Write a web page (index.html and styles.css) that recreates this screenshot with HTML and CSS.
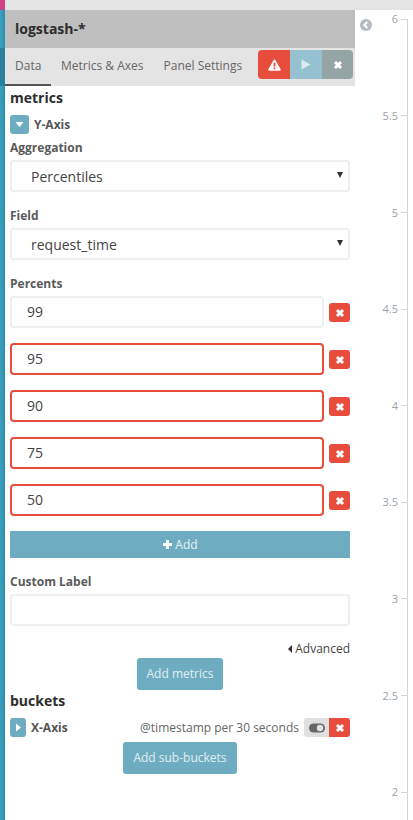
FILE: index.html
```html
<!DOCTYPE html>
<html lang="en">
<head>
<meta charset="utf-8">
<title>logstash-*</title>
<link rel="stylesheet" href="styles.css">
</head>
<body>
<div class="topbar"></div>
<div class="main">
  <aside class="sidebar">
    <div class="title">logstash-*</div>
    <div class="tabs">
      <span class="tab active">Data</span>
      <span class="tab">Metrics &amp; Axes</span>
      <span class="tab">Panel Settings</span>
      <div class="actions">
        <span class="act act-red"><svg width="13" height="12" viewBox="0 0 14 13"><path fill="#fff" fill-rule="evenodd" d="M7 0.500c.4 0 .7.2.9.5l5.800 10.200c.4.7-.1 1.500-.9 1.500H1.200c-.8 0-1.300-.8-.9-1.500L6.100 1c.2-.3.5-.5.9-.5zM6 4v4.200h2V4zM6 9.200V11h2V9.200z"/></svg></span>
        <span class="act act-blue"><svg width="10" height="11" viewBox="0 0 10 11"><path fill="#dcebf0" d="M0.500 0.500L9.500 5.500L0.500 10.500z"/></svg></span>
        <span class="act act-gray"><svg class="x" viewBox="0 0 10 10"><path d="M2 2L8 8M8 2L2 8"/></svg></span>
      </div>
    </div>
    <div class="content">
      <h2 class="section">metrics</h2>
      <div class="agg-head">
        <span class="toggle"><svg width="9" height="5" viewBox="0 0 9 5"><path fill="#fff" d="M0.500 0H8.500L4.500 5z"/></svg></span>
        <span class="agg-name">Y-Axis</span>
      </div>
      <label class="lbl">Aggregation</label>
      <div class="field select"><span>Percentiles</span><i class="caret"></i></div>
      <label class="lbl l-gap">Field</label>
      <div class="field select"><span>request_time</span><i class="caret"></i></div>
      <label class="lbl l-gap">Percents</label>
      <div class="pct-row">
        <div class="field pct">99</div>
        <span class="del"><svg class="x" viewBox="0 0 10 10"><path d="M2 2L8 8M8 2L2 8"/></svg></span>
      </div>
      <div class="pct-row">
        <div class="field pct bad">95</div>
        <span class="del"><svg class="x" viewBox="0 0 10 10"><path d="M2 2L8 8M8 2L2 8"/></svg></span>
      </div>
      <div class="pct-row">
        <div class="field pct bad">90</div>
        <span class="del"><svg class="x" viewBox="0 0 10 10"><path d="M2 2L8 8M8 2L2 8"/></svg></span>
      </div>
      <div class="pct-row">
        <div class="field pct bad">75</div>
        <span class="del"><svg class="x" viewBox="0 0 10 10"><path d="M2 2L8 8M8 2L2 8"/></svg></span>
      </div>
      <div class="pct-row">
        <div class="field pct bad">50</div>
        <span class="del"><svg class="x" viewBox="0 0 10 10"><path d="M2 2L8 8M8 2L2 8"/></svg></span>
      </div>
      <div class="add-bar"><svg width="11" height="11" viewBox="0 0 11 11"><path fill="#fff" d="M4 1h3v3h3v3H7v3H4V7H1V4h3z"/></svg><span>Add</span></div>
      <label class="lbl l-gap">Custom Label</label>
      <div class="field"></div>
      <div class="advanced"><i class="caret-left"></i>Advanced</div>
      <div class="center"><span class="btn btn-metrics">Add metrics</span></div>
      <h2 class="section buckets">buckets</h2>
      <div class="agg-head x-head">
        <span class="toggle narrow"><svg width="5" height="9" viewBox="0 0 5 9"><path fill="#fff" d="M0 0.500V8.500L5 4.500z"/></svg></span>
        <span class="agg-name">X-Axis</span>
        <span class="agg-desc">@timestamp per 30 seconds</span>
        <span class="switch"><svg width="16" height="10" viewBox="0 0 16 10"><rect x="0" y="0.500" width="16" height="9" rx="4.500" fill="#666"/><circle cx="11" cy="5" r="3.200" fill="#e4e4e4"/></svg></span>
        <span class="del joined"><svg class="x" viewBox="0 0 10 10"><path d="M2 2L8 8M8 2L2 8"/></svg></span>
      </div>
      <div class="center"><span class="btn btn-sub">Add sub-buckets</span></div>
    </div>
  </aside>
  <section class="chart">
    <span class="collapse"><svg width="12" height="12" viewBox="0 0 12 12"><circle cx="6" cy="6" r="6" fill="#b4bcc2"/><path d="M7.300 3L4.300 6L7.300 9" fill="none" stroke="#fff" stroke-width="2"/></svg></span>
    <div class="axis">
      <div class="tick">6</div>
      <div class="tick">5.5</div>
      <div class="tick">5</div>
      <div class="tick">4.5</div>
      <div class="tick">4</div>
      <div class="tick">3.5</div>
      <div class="tick">3</div>
      <div class="tick">2.5</div>
      <div class="tick">2</div>
    </div>
  </section>
</div>
</body>
</html>
```
FILE: styles.css
```css
* { box-sizing: border-box; }
html, body { margin: 0; padding: 0; }
body {
  width: 413px;
  height: 820px;
  overflow: hidden;
  background: #fff;
  font-family: "Open Sans", sans-serif;
  color: #444;
  position: relative;
}
.topbar { height: 10px; background: #e4e4e4; margin-left: 5px; }
body::before {
  content: "";
  position: absolute;
  left: 0;
  top: 0;
  width: 5px;
  height: 820px;
  background:
    linear-gradient(#d63f80 0, #d63f80 6px, #b54a8c 10px, transparent 10px),
    linear-gradient(transparent 48px, #2a7f9f 48px, #2a7f9f 86px, transparent 86px),
    linear-gradient(to right, #3fa0bd, #2a8fb0);
}
.main { display: flex; height: 810px; padding-left: 5px; }
.sidebar { width: 350px; flex: none; }
.title {
  height: 38px;
  background: #bfbfbf;
  padding-left: 10px;
  font-size: 14px;
  font-weight: 700;
  line-height: 38px;
  color: #2d2d2d;
}
.tabs {
  height: 38px;
  background: #e4e4e4;
  display: flex;
  align-items: stretch;
  font-size: 12px;
  color: #666;
}
.tab { padding: 0 10px; line-height: 36px; }
.tab.active { border-bottom: 2px solid #555; width: 46px; }
.tab + .tab { padding-left: 10px; }
.actions {
  display: flex;
  margin: 2px 0 0 6px;
  height: 29px;
  border-radius: 4px;
  overflow: hidden;
}
.act { width: 32px; display: flex; align-items: center; justify-content: center; }
.act-red { background: #e74c3c; }
.act-blue { background: #96c1d0; }
.act-gray { background: #95a5a6; width: 31px; }
.x { width: 10px; height: 10px; fill: none; stroke: #fff; stroke-width: 3; }
.content { padding: 0 0 0 5px; }
.section {
  margin: 0;
  font-size: 14px;
  font-weight: 700;
  line-height: 20px;
  padding-top: 2px;
  color: #2d2d2d;
}
.agg-head { display: flex; align-items: center; height: 19px; margin-top: 7px; }
.toggle {
  width: 19px;
  height: 19px;
  background: #6eadc1;
  border-radius: 3px;
  display: flex;
  align-items: center;
  justify-content: center;
}
.toggle.narrow { width: 16px; }
.agg-name { font-size: 12px; font-weight: 700; color: #555; margin-left: 5px; }
.lbl {
  display: block;
  font-size: 12px;
  font-weight: 700;
  line-height: 16px;
  color: #5a5a5a;
  margin-top: 6px;
  margin-bottom: 4px;
}
.lbl.l-gap { margin-top: 16px; }
.field {
  height: 32px;
  width: 340px;
  border: 2px solid #ecf0f1;
  border-radius: 4px;
  font-size: 14px;
  line-height: 28px;
  color: #444;
  padding-left: 15px;
  background: #fff;
}
.select {
  padding: 2px 5px 0 19px;
  display: flex;
  justify-content: space-between;
  align-items: center;
}
.caret {
  display: block;
  width: 0;
  height: 0;
  margin-top: -4px;
  border-left: 3px solid transparent;
  border-right: 3px solid transparent;
  border-top: 6px solid #333;
}
.pct-row { display: flex; align-items: center; width: 340px; justify-content: space-between; margin-bottom: 15px; }
.pct { width: 314px; }
.pct.bad { border-color: #e74c3c; }
.del {
  width: 21px;
  height: 19px;
  margin-top: 1px;
  background: #e74c3c;
  border-radius: 3px;
  display: flex;
  align-items: center;
  justify-content: center;
}
.add-bar {
  height: 27px;
  width: 340px;
  background: #6eadc1;
  color: #e8f1f4;
  font-size: 12px;
  display: flex;
  align-items: center;
  justify-content: center;
  gap: 2px;
}
.advanced {
  width: 340px;
  font-size: 12px;
  line-height: 16px;
  margin-top: 15px;
  display: flex;
  align-items: center;
  justify-content: flex-end;
  color: #444;
}
.caret-left {
  display: block;
  width: 0;
  height: 0;
  border-top: 4px solid transparent;
  border-bottom: 4px solid transparent;
  border-right: 4px solid #333;
  margin-right: 3px;
}
.center { width: 340px; display: flex; justify-content: center; }
.btn {
  height: 32px;
  background: #6eadc1;
  border-radius: 3px;
  color: #e2eef2;
  font-size: 12px;
  line-height: 32px;
  text-align: center;
}
.btn-metrics { width: 86px; margin-top: 1px; }
.btn-sub { width: 114px; margin-top: 5px; }
.buckets { margin-top: -1px; }
.x-head { width: 340px; margin-top: 7px; }
.agg-desc { margin-left: auto; margin-right: 5px; font-size: 12px; color: #666; }
.switch {
  width: 25px;
  height: 19px;
  background: #e0e0e0;
  border-radius: 3px 0 0 3px;
  display: flex;
  align-items: center;
  justify-content: center;
}
.del.joined { margin: 0; border-radius: 0 3px 3px 0; }
.chart { flex: 1; position: relative; min-width: 0; display: flex; justify-content: flex-end; }
.collapse { position: absolute; left: 5px; top: 9px; display: flex; }
.axis {
  width: 58px;
  margin-top: 9px;
  height: 801px;
  padding-top: 0.400px;
  display: flex;
  flex-direction: column;
  gap: 80.600px;
  align-items: flex-end;
  border-right: 1px solid #d5d5d5;
  margin-right: 5px;
}
.tick {
  height: 16px;
  line-height: 16px;
  font-size: 11px;
  color: #9ba3a9;
  display: flex;
  align-items: center;
  gap: 3px;
  margin-top: -8px;
  margin-bottom: 8px;
}
.tick::after { content: ""; width: 6px; height: 1px; background: #d5d5d5; }
```
